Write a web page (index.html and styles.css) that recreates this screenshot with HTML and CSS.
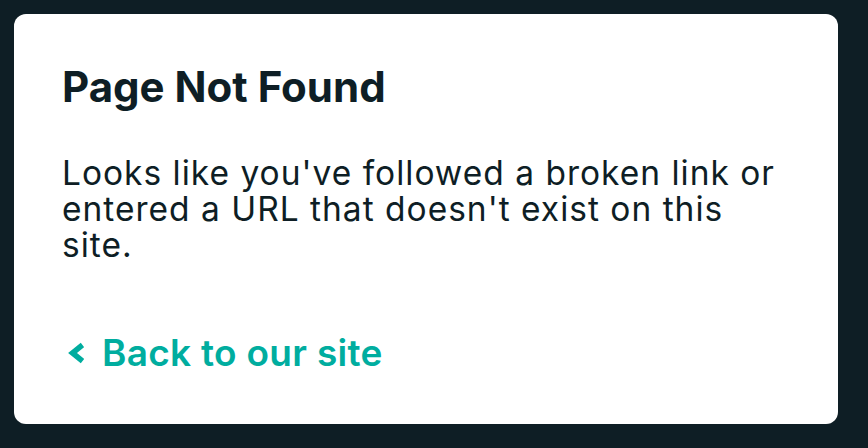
FILE: index.html
```html
<!DOCTYPE html>
<html lang="en">
<head>
<meta charset="utf-8">
<title>Page Not Found</title>
<link rel="stylesheet" href="styles.css">
</head>
<body>
<main class="card">
  <h1 class="title">Page Not Found</h1>
  <p class="message">Looks like you've followed a broken link or entered a URL that doesn't exist on this site.</p>
  <a class="back" href="#">
    <svg class="chev" width="22" height="24" viewBox="0 0 22 24" aria-hidden="true"><path d="M20.5 4 L10.5 12 L20.5 20" fill="none" stroke="currentColor" stroke-width="5.5" stroke-linecap="butt" stroke-linejoin="miter"/></svg>
    <span>Back to our site</span>
  </a>
</main>
</body>
</html>
```

FILE: styles.css
```css
html, body {
  margin: 0;
  height: 100%;
}
body {
  background: #0e1e25;
  color: #0e1e25;
  font-family: Inter, "Noto Sans", sans-serif;
  padding: 14px 30px 24px 14px;
  box-sizing: border-box;
}
.card {
  background: #ffffff;
  border-radius: 12px;
  padding: 48px 48px 40px 48px;
  width: 824px;
  height: 410px;
  box-sizing: border-box;
}
.title {
  margin: 0;
  font-size: 42px;
  line-height: 50px;
  font-weight: 700;
}
.message {
  margin: 43px 0 0 0;
  font-size: 33.5px;
  line-height: 36px;
  letter-spacing: 1px;
  font-weight: 400;
}
.back {
  display: inline-flex;
  align-items: center;
  gap: 18px;
  margin-top: 68px;
  color: #00ad9f;
  text-decoration: none;
  font-size: 37px;
  line-height: 44px;
  letter-spacing: 0.3px;
  font-weight: 600;
}
.chev {
  display: block;
  flex: none;
}
```
